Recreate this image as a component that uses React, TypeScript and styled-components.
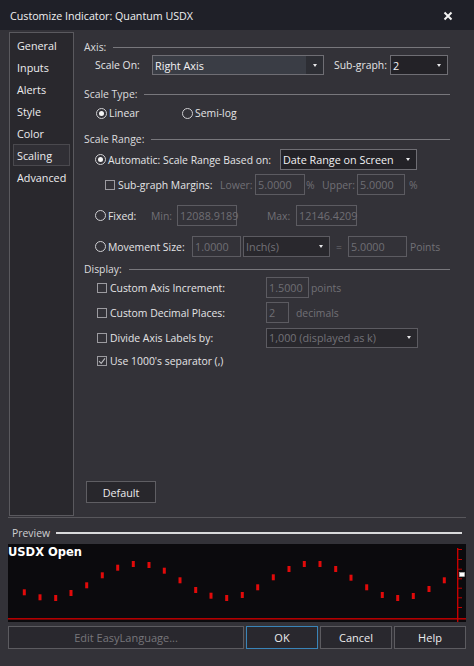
import styled, { createGlobalStyle } from 'styled-components';

const GlobalStyle = createGlobalStyle`
    html, body {
        margin: 0;
        padding: 0;
        background: #333238;
    }
    body {
        font-family: "Open Sans", "Noto Sans", sans-serif;
        font-size: 10.4px;
        color: #e4e4e6;
    }
`;

const TABS = ['General', 'Inputs', 'Alerts', 'Style', 'Color', 'Scaling', 'Advanced'];

// open price marks of the preview series, [x, y] inside the chart box
const MARKS: [number, number][] = [
    [16.3, 48.3], [32, 53.3], [47.7, 54], [63, 49], [78.7, 41.3], [94.3, 31.3],
    [109.7, 23.7], [125.3, 20], [141, 21], [156.3, 26.7], [172, 36.3], [187.7, 46],
    [203, 51.7], [218.7, 54], [234.3, 51], [249.7, 43.3], [265.3, 33.3], [281, 25],
    [296.3, 20], [312, 20], [327.7, 25], [343, 33.7], [358.7, 43.3], [374.3, 51],
    [389.7, 54], [405.3, 52], [421, 45], [436.3, 36.3],
];

const TICKS = [5, 15, 24.7, 34.3, 43.7, 53.3, 63];

type Tone = 'accent' | 'dark' | 'off';

function Dropdown({ value, w, h, ml, tone }: { value: string; w: number; h: number; ml?: number; tone: Tone }) {
    return (
        <Select $w={w} $h={h} $ml={ml} $tone={tone}>
            <Value>{value}</Value>
            <ArrowBox $tone={tone}>
                <Caret />
            </ArrowBox>
        </Select>
    );
}

function App() {
    return (
        <Window>
            <GlobalStyle />
            <TitleBar>
                <span>Customize Indicator: Quantum USDX</span>
                <svg width="10" height="10" viewBox="0 0 10 10">
                    <path d="M1.5 1.5 L8.5 8.5 M8.5 1.5 L1.5 8.5" stroke="#f2f2f2" strokeWidth="2" />
                </svg>
            </TitleBar>

            <Body>
                <Main>
                    <TabList>
                        {TABS.map((t) => (
                            <Tab key={t} $active={t === 'Scaling'}>
                                {t}
                            </Tab>
                        ))}
                    </TabList>

                    <Content>
                        <SectionHeader>Axis:</SectionHeader>
                        <Row $h={20} $pl={11}>
                            <Slot $w={57}>Scale On:</Slot>
                            <Dropdown value="Right Axis" w={172} h={20} tone="accent" />
                            <Slot $w={56} $ml={10}>
                                Sub-graph:
                            </Slot>
                            <Dropdown value="2" w={58} h={20} tone="dark" />
                        </Row>

                        <SectionHeader $mt={11}>Scale Type:</SectionHeader>
                        <Row $h={18} $mt={2} $pl={12}>
                            <Slot $w={86}>
                                <Radio $checked />
                                Linear
                            </Slot>
                            <Slot $w={80}>
                                <Radio />
                                Semi-log
                            </Slot>
                        </Row>

                        <SectionHeader $mt={9}>Scale Range:</SectionHeader>
                        <Row $h={21} $mt={2} $pl={11}>
                            <Slot $w={185}>
                                <Radio $checked />
                                Automatic: Scale Range Based on:
                            </Slot>
                            <Dropdown value="Date Range on Screen" w={137} h={21} tone="dark" />
                        </Row>
                        <Row $h={21} $mt={4} $pl={21}>
                            <Slot $w={115}>
                                <Check />
                                Sub-graph Margins:
                            </Slot>
                            <Slot $w={35} $muted>
                                Lower:
                            </Slot>
                            <Field $w={50}>5.0000</Field>
                            <Slot $w={16} $ml={1} $muted>
                                %
                            </Slot>
                            <Slot $w={35} $muted>
                                Upper:
                            </Slot>
                            <Field $w={48}>5.0000</Field>
                            <Slot $w={16} $ml={4} $muted>
                                %
                            </Slot>
                        </Row>
                        <Row $h={21} $mt={10} $pl={11}>
                            <Slot $w={56}>
                                <Radio />
                                Fixed:
                            </Slot>
                            <Slot $w={26} $muted>
                                Min:
                            </Slot>
                            <Field $w={60}>12088.9189</Field>
                            <Slot $w={29} $ml={30} $muted>
                                Max:
                            </Slot>
                            <Field $w={61}>12146.4209</Field>
                        </Row>
                        <Row $h={21} $mt={10} $pl={11}>
                            <Slot $w={97}>
                                <Radio />
                                Movement Size:
                            </Slot>
                            <Field $w={49}>1.0000</Field>
                            <Dropdown value="Inch(s)" w={87} h={21} ml={2} tone="off" />
                            <Slot $w={12} $ml={6} $muted>
                                =
                            </Slot>
                            <Field $w={59}>5.0000</Field>
                            <Slot $w={40} $ml={3} $muted>
                                Points
                            </Slot>
                        </Row>

                        <SectionHeader $mt={4}>Display:</SectionHeader>
                        <Row $h={21} $pl={13}>
                            <Slot $w={169}>
                                <Check />
                                Custom Axis Increment:
                            </Slot>
                            <Field $w={43}>1.5000</Field>
                            <Slot $w={40} $ml={2} $muted>
                                points
                            </Slot>
                        </Row>
                        <Row $h={21} $mt={4} $pl={13}>
                            <Slot $w={169}>
                                <Check />
                                Custom Decimal Places:
                            </Slot>
                            <Field $w={23}>2</Field>
                            <Slot $w={50} $ml={7} $muted>
                                decimals
                            </Slot>
                        </Row>
                        <Row $h={21} $mt={4} $pl={13}>
                            <Slot $w={169}>
                                <Check />
                                Divide Axis Labels by:
                            </Slot>
                            <Dropdown value="1,000 (displayed as k)" w={152} h={20} tone="off" />
                        </Row>
                        <Row $h={18} $mt={4} $pl={13}>
                            <Slot $w={200}>
                                <Check>
                                    <svg width="8" height="8" viewBox="0 0 8 8">
                                        <path
                                            d="M1 4.2 L3.2 6.4 L7 1.4"
                                            fill="none"
                                            stroke="#b8b8bc"
                                            strokeWidth="1.1"
                                        />
                                    </svg>
                                </Check>
                                Use 1000's separator (,)
                            </Slot>
                        </Row>

                        <DefaultButton>Default</DefaultButton>
                    </Content>
                </Main>

                <PreviewHeader>Preview</PreviewHeader>

                <Chart>
                    <svg width="458" height="78" viewBox="0 0 458 78">
                        <rect x="0" y="74" width="458" height="1.6" fill="#b40000" />
                        <rect x="449" y="4" width="1.4" height="74" fill="#c40000" />
                        {TICKS.map((t) => (
                            <rect key={t} x="450" y={t} width="4" height="1" fill="#c40000" />
                        ))}
                        <rect x="451.5" y="28.5" width="5" height="4" fill="#ffffff" stroke="#bbbbbb" strokeWidth="0.6" />
                        {MARKS.map(([x, y]) => (
                            <rect key={x} x={x - 1.5} y={y - 3} width="3" height="6" fill="#e20a0a" />
                        ))}
                    </svg>
                    <ChartTitle>USDX Open</ChartTitle>
                </Chart>

                <ButtonRow>
                    <DialogButton $w={236} $disabled>
                        Edit EasyLanguage...
                    </DialogButton>
                    <DialogButton $w={72} $primary>
                        OK
                    </DialogButton>
                    <DialogButton $w={72}>Cancel</DialogButton>
                    <DialogButton $w={72}>Help</DialogButton>
                </ButtonRow>
            </Body>
        </Window>
    );
}

export default App;

const Window = styled.div`
    width: 474px;
    height: 666px;
    background: #333238;
    overflow: hidden;
`;

const TitleBar = styled.div`
    height: 30px;
    box-sizing: border-box;
    padding: 2px 21px 0 10px;
    background: #1f2028;
    display: flex;
    align-items: center;
    justify-content: space-between;
    font-size: 10.7px;
    color: #f0f0f2;
`;

const Body = styled.div`
    padding: 0 8px;
`;

const Main = styled.div`
    display: flex;
    align-items: flex-start;
    height: 488px;
    box-sizing: border-box;
    border-bottom: 1px solid #58575c;
`;

const TabList = styled.div`
    margin: 2px 0 0 1px;
    width: 66px;
    height: 484px;
    box-sizing: border-box;
    padding-top: 1px;
    border: 1px solid #5a595e;
    background: #29282d;
    display: flex;
    flex-direction: column;
`;

const Tab = styled.div<{ $active?: boolean }>`
    height: 22px;
    margin: 0 3px;
    padding-left: 3px;
    box-sizing: border-box;
    display: flex;
    align-items: center;
    font-size: 10.8px;
    font-weight: 500;
    color: #ededef;
    border: 1px solid ${(p) => (p.$active ? '#4a494e' : 'transparent')};
    background: ${(p) => (p.$active ? '#302f35' : 'transparent')};
`;

const Content = styled.div`
    flex: 1;
    height: 487px;
    box-sizing: border-box;
    padding: 9px 16px 14px 10px;
    display: flex;
    flex-direction: column;
`;

const SectionHeader = styled.div<{ $mt?: number }>`
    display: flex;
    align-items: center;
    gap: 7px;
    height: 16px;
    margin-top: ${(p) => p.$mt || 0}px;
    color: #dcdcde;

    &::after {
        content: '';
        flex: 1;
        height: 1px;
        margin-top: 1px;
        background: #78777c;
    }
`;

const Row = styled.div<{ $h: number; $mt?: number; $pl?: number }>`
    display: flex;
    align-items: center;
    height: ${(p) => p.$h}px;
    margin-top: ${(p) => p.$mt || 0}px;
    padding-left: ${(p) => p.$pl || 0}px;
`;

const Slot = styled.div<{ $w: number; $ml?: number; $muted?: boolean }>`
    width: ${(p) => p.$w}px;
    margin-left: ${(p) => p.$ml || 0}px;
    flex-shrink: 0;
    display: flex;
    align-items: center;
    white-space: nowrap;
    color: ${(p) => (p.$muted ? '#717076' : '#e4e4e6')};
`;

const Radio = styled.span<{ $checked?: boolean }>`
    width: 11px;
    height: 11px;
    box-sizing: border-box;
    margin-right: 2px;
    border: 1px solid #cfcfd2;
    border-radius: 50%;
    display: flex;
    align-items: center;
    justify-content: center;
    flex-shrink: 0;

    &::after {
        content: '';
        width: 5px;
        height: 5px;
        border-radius: 50%;
        background: ${(p) => (p.$checked ? '#f4f4f4' : 'transparent')};
    }
`;

const Check = styled.span`
    width: 10px;
    height: 10px;
    box-sizing: border-box;
    margin-right: 3px;
    border: 1px solid #9c9ba0;
    display: flex;
    align-items: center;
    justify-content: center;
    flex-shrink: 0;
`;

const Field = styled.div<{ $w: number }>`
    width: ${(p) => p.$w}px;
    height: 100%;
    box-sizing: border-box;
    flex-shrink: 0;
    padding-left: 2px;
    border: 1px solid #5c5b61;
    display: flex;
    align-items: center;
    color: #6f6e74;
    font-size: 10.8px;
`;

const SELECT_BG: Record<Tone, string> = {
    accent: '#3a3d45',
    dark: '#232227',
    off: '#29282d',
};

const Select = styled.div<{ $w: number; $h: number; $ml?: number; $tone: Tone }>`
    width: ${(p) => p.$w}px;
    height: ${(p) => p.$h}px;
    margin-left: ${(p) => p.$ml || 0}px;
    box-sizing: border-box;
    flex-shrink: 0;
    display: flex;
    align-items: stretch;
    border: 1px solid ${(p) => (p.$tone === 'off' ? '#5c5b61' : '#6f6e74')};
    background: ${(p) => SELECT_BG[p.$tone]};
    color: ${(p) => (p.$tone === 'off' ? '#737278' : '#f2f2f4')};
    font-size: 10.8px;
`;

const Value = styled.div`
    flex: 1;
    display: flex;
    align-items: center;
    padding-left: 2px;
    white-space: nowrap;
    overflow: hidden;
`;

const ArrowBox = styled.div<{ $tone?: Tone }>`
    width: 17px;
    display: flex;
    align-items: center;
    justify-content: center;
    background: ${(p) => (p.$tone === 'accent' ? '#2d2e34' : 'transparent')};
`;

const Caret = styled.div`
    width: 0;
    height: 0;
    border-left: 2.5px solid transparent;
    border-right: 2.5px solid transparent;
    border-top: 3px solid #e8e8ea;
`;

const DefaultButton = styled.button`
    margin-top: auto;
    margin-left: 2px;
    width: 70px;
    height: 22px;
    box-sizing: border-box;
    border: 1px solid #5f5e63;
    background: #28272c;
    color: #ececee;
    font-family: inherit;
    font-size: 10.8px;
    padding: 0;
`;

const PreviewHeader = styled.div`
    display: flex;
    align-items: center;
    gap: 6px;
    height: 16px;
    margin-top: 7px;
    padding: 0 4px;
    color: #cfcfd2;

    &::after {
        content: '';
        flex: 1;
        height: 2px;
        background: #dadadc;
    }
`;

const Chart = styled.div`
    position: relative;
    margin-top: 3px;
    height: 78px;
    background: #0b0a0d;

    svg {
        position: absolute;
        left: 0;
        top: 0;
    }
`;

const ChartTitle = styled.div`
    position: relative;
    padding-top: 1px;
    font-family: "DejaVu Sans", sans-serif;
    font-weight: bold;
    font-size: 11.5px;
    line-height: 15px;
    color: #ffffff;
`;

const ButtonRow = styled.div`
    display: flex;
    gap: 2px;
    margin-top: 4px;
    height: 23px;
`;

const DialogButton = styled.button<{ $w: number; $primary?: boolean; $disabled?: boolean }>`
    width: ${(p) => p.$w}px;
    height: 100%;
    box-sizing: border-box;
    padding: 0;
    border: 1px solid ${(p) => (p.$primary ? '#3a84b8' : '#5c5b60')};
    background: #29282e;
    color: ${(p) => (p.$disabled ? '#77767b' : '#ececee')};
    font-family: inherit;
    font-size: 11px;
`;
